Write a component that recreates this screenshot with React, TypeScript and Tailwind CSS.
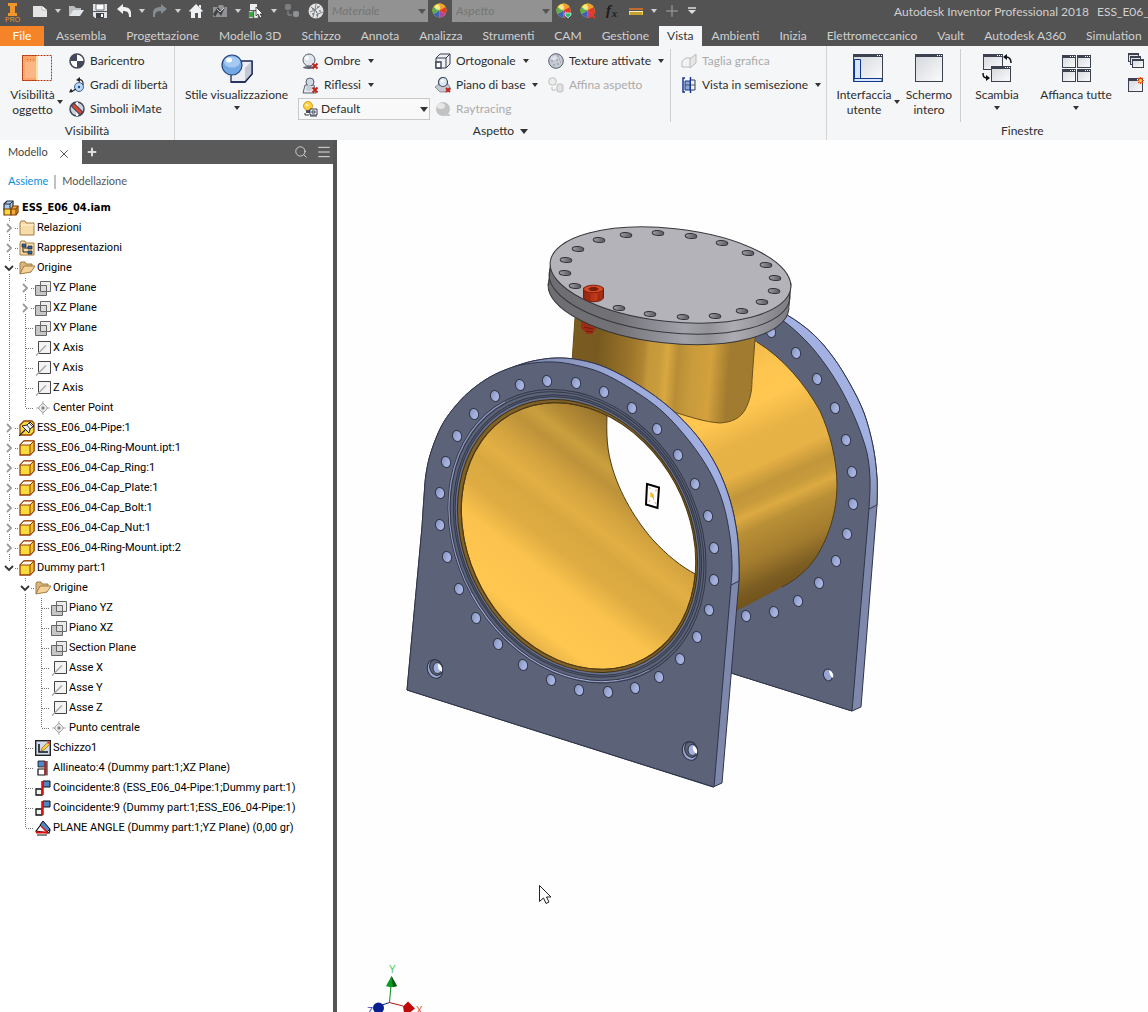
import type { ReactNode } from 'react';
import { Menu, Plus, Search, X } from 'lucide-react';

function Caret({ light = false }: { light?: boolean }) {
  return (
    <svg width="6" height="4" viewBox="0 0 6 4" className="shrink-0">
      <path d="M0 0h6L3 4z" fill={light ? '#d0d0d0' : '#333'} />
    </svg>
  );
}

function Svg({ w = 16, h = 16, children }: { w?: number; h?: number; children: ReactNode }) {
  return (
    <svg width={w} height={h} viewBox={`0 0 ${w} ${h}`} className="shrink-0" fill="none">
      {children}
    </svg>
  );
}

/* ---------- quick access icons ---------- */

const NewIcon = () => (
  <Svg>
    <path d="M1 3h9l5 4v7H1z" fill="#e4e4e4" />
    <path d="M10 3v4h5" fill="#fff" stroke="#999" strokeWidth=".6" />
  </Svg>
);

const OpenIcon = () => (
  <Svg>
    <path d="M1 13V3h5l2 2h5v2H5z" fill="#b9bcc0" />
    <path d="M5 7h11l-4 6H1z" fill="#e2e5e8" />
  </Svg>
);

const SaveIcon = () => (
  <Svg>
    <path d="M1 1h14v14H3l-2-2z" fill="#dfe2e6" />
    <path d="M4 1h8v6H4z" fill="#fff" stroke="#50545c" strokeWidth=".8" />
    <path d="M1 8h14v1H1z" fill="#50545c" />
    <path d="M4 10h8v5H4z" fill="#3c4048" />
    <path d="M9 11h2v3H9z" fill="#fff" />
  </Svg>
);

const UndoIcon = () => (
  <Svg>
    <path d="M1 6l6-5v3c5 0 8 2 8 6v4h-2c0-4-1-6-6-6v3z" fill="#f0f0f0" />
  </Svg>
);

const RedoIcon = () => (
  <Svg>
    <path d="M15 6L9 1v3c-5 0-8 2-8 6v4h2c0-4 1-6 6-6v3z" fill="#858b93" />
  </Svg>
);

const HomeIcon = () => (
  <Svg>
    <path d="M8 1l7 7-1 1-1-1v7h-3v-5H7v5H3V8L2 9 1 8z" fill="#eef0f2" />
    <path d="M11 2h2v4l-2-2z" fill="#eef0f2" />
  </Svg>
);

const UpdateIcon = () => (
  <Svg>
    <path d="M1 4h5l1-2h4l1 2h3v10H1z" fill="#909295" />
    <path d="M1 11l5-7 3 4 4-4-4 9-3-4-3 5z" fill="#3f4144" />
    <path d="M5 6l3 3 4-4" stroke="#c5c7c9" />
  </Svg>
);

const SelectIcon = () => (
  <Svg>
    <path d="M2 1h7v6H2z" fill="#eceff0" />
    <path d="M1 8h4v7H1zM6 8h4v7H6z" fill="#fff" stroke="#777" strokeWidth=".6" />
    <path d="M1 9h4v5H1z" fill="#3aa545" />
    <path d="M8 4v9l2-2 2 4 2-1-2-3h3z" fill="#fff" stroke="#333" strokeWidth=".8" />
  </Svg>
);

const LinksIcon = () => (
  <Svg>
    <rect x="1" y="1" width="6" height="6" rx="2" fill="#7b7f84" />
    <rect x="9" y="8" width="6" height="6" rx="2" fill="#8e9297" />
    <path d="M4 8v4h4" stroke="#8e9297" />
  </Svg>
);

const MaterialIcon = () => (
  <Svg>
    <circle cx="8" cy="8" r="7.500" fill="#e2e4e6" />
    <path d="M3 4l4 3 5-4M2 9l5-2 3 4 5-2M7 7l-2 7M10 11l-1 4M8 1l-1 6" stroke="#6c7076" strokeWidth=".8" />
    <path d="M4 6h2M9 4h2M11 8h2M4 11h2M8 12h2M8 9h1" stroke="#54585e" strokeWidth="1.200" />
  </Svg>
);

function ColorWheel({ mark }: { mark?: 'down' | 'x' }) {
  return (
    <Svg>
      <circle cx="7.500" cy="7.500" r="7" fill="#f1d83a" />
      <path d="M7.500 7.500V.5a7 7 0 0 1 6 3.500z" fill="#f2a132" />
      <path d="M7.500 7.500l6-3.500a7 7 0 0 1 0 7z" fill="#e2392c" />
      <path d="M7.500 7.500l6 3.500a7 7 0 0 1-6 3.500z" fill="#b0489d" />
      <path d="M7.500 7.500v7a7 7 0 0 1-6-3.500z" fill="#3b62b8" />
      <path d="M7.500 7.500l-6 3.500a7 7 0 0 1 0-7z" fill="#58b04a" />
      <circle cx="5.500" cy="4.500" r="2.500" fill="#fff" opacity=".45" />
      {mark === 'down' && <path d="M9 10h6v2l-3 3-3-3z" fill="#25c268" stroke="#e8f6ff" strokeWidth=".7" />}
      {mark === 'x' && <path d="M9 9l6 6M15 9l-6 6" stroke="#ea3a20" strokeWidth="1.800" />}
    </Svg>
  );
}

const FxIcon = () => (
  <Svg h={20}>
    <text x="2" y="14" fontFamily="Liberation Serif, serif" fontStyle="italic" fontSize="15" fontWeight="700" fill="#1c1c1c">f</text>
    <text x="8" y="16" fontFamily="Liberation Serif, serif" fontStyle="italic" fontSize="10" fontWeight="700" fill="#1c1c1c">x</text>
  </Svg>
);

const RulerIcon = () => (
  <Svg>
    <path d="M1 6h14" stroke="#e8702a" strokeWidth="1.500" />
    <path d="M1 8h14v1H1z" fill="#fff3c4" />
    <path d="M1 9h14v3H1z" fill="#f0c53a" />
    <path d="M3 12V9M5 12V9M7 12V9M9 12V9M11 12V9M13 12V9" stroke="#6a4d12" strokeWidth=".6" />
  </Svg>
);

/* ---------- ribbon icons ---------- */

const ObjectVisibilityIcon = () => (
  <Svg w={32} h={30}>
    <path d="M1 2h15v26H1z" fill="#fba56b" />
    <path d="M4 9h12v16H4z" fill="#fcb585" />
    <path d="M15 2h2v26h-2z" fill="#f4e3a4" />
    <path d="M1 2.500h15M1 27.500h15M1.500 2v26" stroke="#d2622c" />
    <path d="M1.500 2.500h29v25h-29z" stroke="#ab3a14" strokeDasharray="2 1" />
    <path d="M6 6.500h9" stroke="#d2622c" strokeDasharray="1 2" />
  </Svg>
);

const GravityIcon = () => (
  <Svg>
    <circle cx="8" cy="8" r="7" fill="#fff" />
    <path d="M8 1a7 7 0 0 0-7 7h7zM8 15a7 7 0 0 0 7-7H8z" fill="#43485a" />
    <circle cx="8" cy="8" r="7" stroke="#43485a" strokeWidth="1.500" />
  </Svg>
);

const FreedomIcon = () => (
  <Svg>
    <circle cx="10" cy="10" r="4.500" fill="#b9d8f3" stroke="#3f6391" />
    <circle cx="10" cy="10" r="1.200" fill="#1f4f96" />
    <path d="M9 3c3-1 6 1 5 5M7 12l-5 3" stroke="#222" strokeWidth="1.300" />
    <path d="M7 3l4-3v5zM0 15.500l2-4 2 3.500z" fill="#222" />
  </Svg>
);

const IMateIcon = () => (
  <Svg>
    <circle cx="8" cy="8" r="7" fill="#cfd4de" stroke="#43485a" strokeWidth="1.500" />
    <path d="M8 1v14" stroke="#f4f5f8" strokeWidth="2" />
    <path d="M3 3l10 10" stroke="#43485a" strokeWidth="5" />
    <path d="M4 4l8 8" stroke="#e5442f" strokeWidth="2.500" />
  </Svg>
);

const VisualStyleIcon = () => (
  <Svg w={32} h={32}>
    <path d="M10 16l8-8h13v13l-7 8H10z" fill="#eceef4" stroke="#1b2757" strokeWidth="1.300" />
    <path d="M24 29V15l7-7v13z" fill="#c3c8d5" />
    <path d="M31 8v13l-7 8H10" stroke="#1b2757" strokeWidth="1.300" />
    <circle cx="11" cy="12" r="10" fill="#74a8e4" stroke="#27467c" strokeWidth="1.200" />
    <ellipse cx="11" cy="9" rx="8" ry="5.500" fill="#a5cbf2" />
    <ellipse cx="8" cy="7" rx="3" ry="2.500" fill="#fff" />
  </Svg>
);

const RedX = () => <path d="M10.500 10.500l5 5M15.500 10.500l-5 5" stroke="#c9211a" strokeWidth="2" />;

const ShadowIcon = () => (
  <Svg w={17} h={17}>
    <ellipse cx="7" cy="14.500" rx="6" ry="1.500" fill="#5a6070" />
    <circle cx="7" cy="7" r="6" fill="#dfe5ec" stroke="#596072" />
    <circle cx="5" cy="5" r="2" fill="#fff" />
    <RedX />
  </Svg>
);

const ReflectIcon = () => (
  <Svg w={17} h={17}>
    <path d="M3 8h9l2 8H1z" fill="#e6e9ee" stroke="#596072" />
    <circle cx="8" cy="5" r="4" fill="#cfd8e2" stroke="#596072" />
    <circle cx="7" cy="11" r="3" fill="#c4ccd6" />
    <RedX />
  </Svg>
);

const LightIcon = () => (
  <Svg>
    <circle cx="6" cy="5" r="4.500" fill="#ffcf3a" stroke="#c98c10" strokeWidth=".8" />
    <circle cx="5" cy="4" r="1.500" fill="#fff4bd" />
    <path d="M4 9h4v3H4z" fill="#4c5261" />
    <path d="M3 12v2h4" stroke="#333" />
    <path d="M8 8h7v6H8z" fill="#fff" stroke="#333b4f" />
    <path d="M10 10h3v2h-3zM8 15h7" stroke="#333b4f" />
  </Svg>
);

const OrthoIcon = () => (
  <Svg>
    <path d="M1 5l4-4h10v10l-4 4H1z" fill="#eef0f3" stroke="#333b4f" />
    <path d="M11 15V5l4-4M1 5h10" stroke="#333b4f" />
    <path d="M1 9h5v6H1z" fill="#fff" stroke="#333b4f" strokeWidth="1.300" />
  </Svg>
);

const GroundIcon = () => (
  <Svg>
    <path d="M0 10l4-3h9l3 5-5 3H5z" fill="#c4c8cf" stroke="#6e7482" strokeWidth=".7" />
    <circle cx="8" cy="5" r="4.500" fill="#dde7f2" stroke="#3d475c" strokeWidth="1.200" />
    <circle cx="7" cy="4" r="1.500" fill="#fff" />
    <path d="M11 11l4 4M15 11l-4 4" stroke="#c9211a" strokeWidth="2" />
  </Svg>
);

const RayIcon = () => (
  <Svg>
    <circle cx="8" cy="8" r="7" fill="#c2c2c2" />
    <ellipse cx="6" cy="5" rx="4" ry="3" fill="#e6e6e6" />
    <path d="M9 14h6" stroke="#c8c8c8" strokeWidth="2" />
  </Svg>
);

const TextureIcon = () => (
  <Svg>
    <circle cx="8" cy="8" r="7.300" fill="#c4c9d2" stroke="#555c6b" />
    <path d="M4 4h2M9 3h2M3 8h2M8 7h2M12 9h1M5 12h2M9 11h2M11 6h1" stroke="#8a92a2" strokeWidth="1.200" />
    <ellipse cx="6" cy="5" rx="3" ry="2" fill="#eceff3" opacity=".7" />
  </Svg>
);

const RefineIcon = () => (
  <Svg>
    <circle cx="4.500" cy="4.500" r="3.800" fill="#ededed" stroke="#bdbdbd" />
    <rect x="9" y="7" width="6" height="8" rx="2" fill="#e2e2e2" stroke="#bdbdbd" />
    <path d="M4 10v3h4" stroke="#bdbdbd" />
  </Svg>
);

const SliceIcon = () => (
  <Svg>
    <path d="M1 8l4-3h5v9H1z" fill="#f3f3f3" stroke="#bbb" />
    <path d="M9 6l6-5v9l-6 5z" fill="#e6e6e6" stroke="#bbb" />
  </Svg>
);

const HalfSectionIcon = () => (
  <Svg>
    <path d="M4 1H2v14h2M9.500 0v16" stroke="#12368f" strokeWidth="1.500" />
    <path d="M4 4h5v9H4z" fill="#8fa6d4" stroke="#12368f" />
    <path d="M10 3h4v10h-4" fill="#eef0f4" stroke="#333b4f" />
    <path d="M4 8h10" stroke="#333b4f" strokeWidth=".8" />
  </Svg>
);

function WindowShape({ x, y, w, h, bar = 3 }: { x: number; y: number; w: number; h: number; bar?: number }) {
  return (
    <g>
      <rect x={x + 0.5} y={y + 0.5} width={w - 1} height={h - 1} fill="url(#win)" stroke="#3c4150" />
      <rect x={x} y={y} width={w} height={bar} fill="#3c4150" />
      {bar > 2 && <path d={`M${x + w - 6} ${y + 1.5}h5`} stroke="#fff" strokeDasharray="1 1" />}
    </g>
  );
}

const WinGradient = () => (
  <defs>
    <linearGradient id="win" x1="0" y1="0" x2="1" y2="1">
      <stop offset="0" stopColor="#d3d6db" />
      <stop offset="1" stopColor="#fafbfc" />
    </linearGradient>
  </defs>
);

const InterfaceIcon = () => (
  <Svg w={30} h={30}>
    <WinGradient />
    <WindowShape x={0} y={1} w={30} h={28} />
    <path d="M1.500 6.500h6v19h-6z" fill="#d6e7f8" stroke="#12368f" />
    <path d="M1 25.500h28v3H1z" fill="#d6e7f8" stroke="#12368f" />
  </Svg>
);

const FullScreenIcon = () => (
  <Svg w={30} h={30}>
    <WindowShape x={1} y={1} w={28} h={28} />
  </Svg>
);

const SwitchIcon = () => (
  <Svg w={30} h={30}>
    <WindowShape x={1} y={1} w={20} h={16} />
    <WindowShape x={9} y={13} w={20} h={16} />
    <path d="M24 4c4 0 5 2 5 6M1 20c0 4 1 5 5 5" stroke="#111" strokeWidth="1.500" />
    <path d="M21 4l4-3v6zM8 25l-4-3v6z" fill="#111" />
  </Svg>
);

const TileIcon = () => (
  <Svg w={30} h={30}>
    <WindowShape x={1} y={2} w={14} h={13} />
    <WindowShape x={16} y={2} w={14} h={13} />
    <WindowShape x={1} y={16} w={14} h={13} />
    <WindowShape x={16} y={16} w={14} h={13} />
  </Svg>
);

const CascadeIcon = () => (
  <Svg>
    <WindowShape x={0} y={0} w={11} h={9} bar={2} />
    <WindowShape x={2} y={3} w={11} h={9} bar={2} />
    <WindowShape x={4} y={6} w={12} h={9} bar={2} />
  </Svg>
);

const NewWindowIcon = () => (
  <Svg>
    <WindowShape x={0} y={1} w={15} h={14} />
    <path d="M12.500 0v7M9 3.500h7M10 1l5 5M15 1l-5 5" stroke="#e8501e" strokeWidth="1.200" />
    <circle cx="12.500" cy="3.500" r="1.500" fill="#ffd84a" />
  </Svg>
);

/* ---------- browser tree icons ---------- */

const PartIcon = () => (
  <Svg>
    <path d="M1 5l4-4h10v10l-4 4H1z" fill="#f6dc3c" stroke="#9a3e06" strokeWidth="1.300" />
    <path d="M1 5l4-4h10l-4 4z" fill="#fffbe6" stroke="#9a3e06" />
    <path d="M11 5l4-4v10l-4 4z" fill="#eec02e" stroke="#9a3e06" />
  </Svg>
);

const PinnedPartIcon = () => (
  <Svg>
    <path d="M1 5l4-4h8l2 2v9l-3 3H1z" fill="#f6dc3c" stroke="#9a3e06" strokeWidth="1.300" />
    <path d="M0 16l6-6" stroke="#222" strokeWidth="1.200" />
    <path d="M3 6l7 7 1-4 4-3-4-4-3 3z" fill="#ededed" stroke="#222" />
    <path d="M8 5l3 4M10 3l4 4" stroke="#222" strokeWidth=".8" />
  </Svg>
);

const AssemblyIcon = () => (
  <Svg>
    <path d="M1 4l3-3h6v6l-2 3H1z" fill="#aecbe8" stroke="#222c46" strokeWidth="1.200" />
    <path d="M1 4h6l3-3M7 4v5" stroke="#222c46" />
    <path d="M1 9h7v6H1z" fill="#f8d83a" stroke="#7a3c06" strokeWidth="1.200" />
    <path d="M8 9l2-3h5v6l-2 3H8z" fill="#f0a93a" stroke="#7a3c06" strokeWidth="1.200" />
    <path d="M8 9h5l2-3M13 9v6" stroke="#7a3c06" />
  </Svg>
);

const FolderIcon = () => (
  <Svg>
    <path d="M1 3l1-2h4l1 2h8v12H1z" fill="#f6dca6" stroke="#a67c45" />
    <path d="M2 5h13" stroke="#fff4d8" />
  </Svg>
);

const RepresentationsIcon = () => (
  <Svg>
    <path d="M1 3l1-2h4l1 2h8v12H1z" fill="#f6dca6" stroke="#a67c45" />
    <path d="M4 6v6h5M5 8h5" stroke="#222" />
    <path d="M3 4h4v3H3zM9 6h4v3H9zM9 11h4v3H9z" fill="#2d66b3" stroke="#222" strokeWidth=".7" />
  </Svg>
);

const OpenFolderIcon = () => (
  <Svg>
    <path d="M1 14V3l1-1h4l1 2h6v3" fill="#d9b77a" stroke="#a67c45" />
    <path d="M1 14L5 6h11l-4 6z" fill="#f3d397" stroke="#a67c45" />
  </Svg>
);

const PlaneIcon = () => (
  <Svg>
    <path d="M5.500 1.500h10v10h-10z" fill="#ececec" stroke="#666" />
    <path d="M.5 5.500h11v10H.5z" fill="#c6c6c6" stroke="#666" />
    <path d="M5.500 5.500h6v6h-6z" fill="#dcdcdc" stroke="#666" />
  </Svg>
);

const AxisIcon = () => (
  <Svg>
    <path d="M3.500 1.500h12v12h-12z" fill="#f3f3f3" stroke="#444" />
    <path d="M1 15.500L11 5.500" stroke="#aaa" strokeWidth="1.500" />
  </Svg>
);

const PointIcon = () => (
  <Svg>
    <path d="M8 3l5 5-5 5-5-5z" fill="#f1f1f1" stroke="#a5a5a5" />
    <path d="M8 1v4M8 11v4M1 8h4M11 8h4" stroke="#b3b3b3" />
    <circle cx="8" cy="8" r="1.700" fill="#888" />
  </Svg>
);

const SketchIcon = () => (
  <Svg>
    <rect x=".7" y=".7" width="14.600" height="14.600" fill="#cfdeee" stroke="#222" strokeWidth="1.400" />
    <path d="M4 4v8h9" stroke="#111" strokeWidth="1.500" />
    <path d="M6 11l1-3 6-6 2 2-6 6z" fill="#ffce3d" stroke="#a86d12" strokeWidth=".8" />
    <path d="M12 3l2-2 1 2-1 1z" fill="#e2392c" />
  </Svg>
);

const FlushIcon = () => (
  <Svg>
    <path d="M3 1h7v6H3z" fill="#4d87c4" stroke="#111" strokeWidth=".8" />
    <path d="M3 9h7v6H3z" fill="#fff" stroke="#111" strokeWidth="1.200" />
    <path d="M10.500 1v14" stroke="#e00f0f" strokeWidth="2" />
    <path d="M12 1v14.500" stroke="#111" />
  </Svg>
);

const MateIcon = () => (
  <Svg>
    <path d="M8 1h7v6H8z" fill="#4d87c4" stroke="#111" />
    <path d="M1 9h6v6H1z" fill="#f3f3f3" stroke="#111" strokeWidth="1.300" />
    <path d="M7.500 1v14" stroke="#e00f0f" strokeWidth="2.500" />
  </Svg>
);

const AngleIcon = () => (
  <Svg>
    <path d="M1 11l7-9 7 8-1 3z" fill="#fff" stroke="#111" strokeWidth="1.200" />
    <path d="M8 1l7 8-3 3-7-7z" fill="#4d87c4" stroke="#111" />
    <path d="M6 6l6 6" stroke="#e00f0f" strokeWidth="1.500" />
    <path d="M1 12.500h12" stroke="#e00f0f" strokeWidth="2" />
    <path d="M2 15h10" stroke="#111" />
  </Svg>
);

/* ---------- title bar ---------- */

function QuickButton({ label, children }: { label: string; children: ReactNode }) {
  return (
    <button aria-label={label} className="flex w-6 shrink-0 items-center justify-center">
      {children}
    </button>
  );
}

function QuickCaret({ label }: { label: string }) {
  return (
    <button aria-label={label} className="flex w-3 shrink-0 items-center justify-center">
      <Caret light />
    </button>
  );
}

function QuickSelect({ label }: { label: string }) {
  return (
    <div className="relative h-[22px] w-[100px] shrink-0">
      <select
        aria-label={label}
        className="block h-full w-full appearance-none bg-[#929292] px-1 text-xs italic text-[#757575]"
      >
        <option>{label}</option>
      </select>
      <span className="pointer-events-none absolute top-[9px] right-[2px]">
        <svg width="8" height="5"><path d="M0 0h8L4 5z" fill="#555" /></svg>
      </span>
    </div>
  );
}

function TitleBar() {
  return (
    <div className="flex h-[26px] overflow-hidden bg-[#535353] text-[#d0d0d0]">
      <div className="flex w-7 shrink-0 justify-center">
        <svg width="20" height="26" viewBox="0 0 20 26">
          <path d="M4 3h9v3h-2v7h2v3H4v-3h2V6H4z" fill="#f0962c" />
          <text x="1" y="22" fontSize="7" fontFamily="Liberation Sans, sans-serif" fill="#f0962c">PRO</text>
        </svg>
      </div>
      <div className="flex h-[22px] shrink-0">
        <QuickButton label="Nuovo"><NewIcon /></QuickButton>
        <QuickCaret label="Opzioni nuovo" />
        <QuickButton label="Apri"><OpenIcon /></QuickButton>
        <QuickButton label="Salva"><SaveIcon /></QuickButton>
        <QuickButton label="Annulla"><UndoIcon /></QuickButton>
        <QuickCaret label="Opzioni annulla" />
        <QuickButton label="Ripeti"><RedoIcon /></QuickButton>
        <QuickCaret label="Opzioni ripeti" />
        <QuickButton label="Home"><HomeIcon /></QuickButton>
        <QuickButton label="Aggiorna"><UpdateIcon /></QuickButton>
        <QuickCaret label="Opzioni aggiorna" />
        <QuickButton label="Seleziona"><SelectIcon /></QuickButton>
        <QuickCaret label="Opzioni seleziona" />
        <QuickButton label="Collegamenti"><LinksIcon /></QuickButton>
        <QuickButton label="Materiali"><MaterialIcon /></QuickButton>
        <QuickSelect label="Materiale" />
        <QuickButton label="Aspetti"><ColorWheel /></QuickButton>
        <QuickSelect label="Aspetto" />
        <QuickButton label="Regola"><ColorWheel mark="down" /></QuickButton>
        <QuickButton label="Cancella"><ColorWheel mark="x" /></QuickButton>
        <QuickButton label="Parametri"><FxIcon /></QuickButton>
        <QuickButton label="Misura"><RulerIcon /></QuickButton>
        <QuickCaret label="Opzioni misura" />
        <QuickButton label="Aggiungi"><Plus size={18} color="#8d8d8d" /></QuickButton>
        <button aria-label="Personalizza" className="flex w-4 items-center justify-center">
          <svg width="8" height="8"><path d="M0 1h8" stroke="#ddd" strokeWidth="1.500" /><path d="M0 3h8L4 7z" fill="#ddd" /></svg>
        </button>
      </div>
      <div className="flex min-w-0 flex-1 gap-2 pl-[194px] text-xs leading-6 whitespace-nowrap">
        <span>Autodesk Inventor Professional 2018</span>
        <span>ESS_E06_04</span>
      </div>
    </div>
  );
}

const tabs = [
  'Assembla', 'Progettazione', 'Modello 3D', 'Schizzo', 'Annota', 'Analizza', 'Strumenti', 'CAM',
  'Gestione', 'Vista', 'Ambienti', 'Inizia', 'Elettromeccanico', 'Vault', 'Autodesk A360', 'Simulation',
];

function TabBar() {
  return (
    <nav className="flex h-5 overflow-hidden bg-[#535353] text-xs whitespace-nowrap text-[#d0d0d0]">
      <button className="mr-[2px] w-11 shrink-0 bg-[#f58428] text-white">File</button>
      {tabs.map((tab) => (
        <button
          key={tab}
          className={tab === 'Vista' ? 'shrink-0 bg-[#f5f6f7] px-2 text-[#333]' : 'shrink-0 px-[10px]'}
        >
          {tab}
        </button>
      ))}
    </nav>
  );
}

/* ---------- ribbon ---------- */

type BigProps = { icon: ReactNode; lines: string[]; caret?: 'side' | 'below'; className: string };

function BigButton({ icon, lines, caret, className }: BigProps) {
  return (
    <button className={`flex shrink-0 flex-col items-center pt-1 leading-[15px] ${className}`}>
      <span className="flex h-[34px] items-start">{icon}</span>
      <span className="flex items-center">
        <span>
          {lines.map((line) => (
            <span key={line} className="block whitespace-nowrap">{line}</span>
          ))}
        </span>
        {caret === 'side' && <span className="ml-[2px]"><Caret /></span>}
      </span>
      {caret === 'below' && <span className="pt-1"><Caret /></span>}
    </button>
  );
}

type SmallProps = { icon: ReactNode; label: string; caret?: boolean; disabled?: boolean };

function SmallButton({ icon, label, caret, disabled }: SmallProps) {
  return (
    <button
      disabled={disabled}
      className="flex h-6 items-center gap-[5px] whitespace-nowrap disabled:text-[#ababab]"
    >
      {icon}
      <span>{label}</span>
      {caret && <span className="ml-[2px]"><Caret /></span>}
    </button>
  );
}

function Ribbon() {
  return (
    <div className="flex h-[94px] overflow-hidden bg-[#f5f6f7] text-xs text-[#2d2d2d]">
      <section className="flex w-[175px] shrink-0 flex-col border-r border-[#d3d3d3]">
        <div className="flex h-[76px] pt-[3px]">
          <BigButton icon={<ObjectVisibilityIcon />} lines={['Visibilità', 'oggetto']} caret="side" className="w-[69px] pl-1" />
          <div>
            <SmallButton icon={<GravityIcon />} label="Baricentro" />
            <SmallButton icon={<FreedomIcon />} label="Gradi di libertà" />
            <SmallButton icon={<IMateIcon />} label="Simboli iMate" />
          </div>
        </div>
        <h2 className="text-center leading-[18px]">Visibilità</h2>
      </section>

      <section className="flex w-[652px] shrink-0 flex-col border-r border-[#d3d3d3]">
        <div className="flex h-[76px] pt-[3px]">
          <BigButton icon={<VisualStyleIcon />} lines={['Stile visualizzazione']} caret="below" className="w-[123px]" />
          <div className="w-[137px]">
            <div className="pl-1">
              <SmallButton icon={<ShadowIcon />} label="Ombre" caret />
              <SmallButton icon={<ReflectIcon />} label="Riflessi" caret />
            </div>
            <div className="relative mt-[1px] h-[22px] w-[132px]">
              <select aria-label="Stile di illuminazione" className="block h-full w-full appearance-none border border-[#c9c9c9] bg-[#f9f9f9] pl-[22px]">
                <option>Default</option>
              </select>
              <span className="pointer-events-none absolute top-[3px] left-1"><LightIcon /></span>
              <span className="pointer-events-none absolute top-[9px] right-[2px]">
                <svg width="8" height="5"><path d="M0 0h8L4 5z" fill="#333" /></svg>
              </span>
            </div>
          </div>
          <div className="w-[113px]">
            <SmallButton icon={<OrthoIcon />} label="Ortogonale" caret />
            <SmallButton icon={<GroundIcon />} label="Piano di base" caret />
            <SmallButton icon={<RayIcon />} label="Raytracing" disabled />
          </div>
          <div className="w-[123px] border-r border-[#cfcfcf]">
            <SmallButton icon={<TextureIcon />} label="Texture attivate" caret />
            <SmallButton icon={<RefineIcon />} label="Affina aspetto" disabled />
          </div>
          <div className="pl-[10px]">
            <SmallButton icon={<SliceIcon />} label="Taglia grafica" disabled />
            <SmallButton icon={<HalfSectionIcon />} label="Vista in semisezione" caret />
          </div>
        </div>
        <button className="flex items-center justify-center gap-[6px] self-center leading-[18px]">
          Aspetto
          <svg width="8" height="5"><path d="M0 0h8L4 5z" fill="#333" /></svg>
        </button>
      </section>

      <section className="flex flex-1 flex-col">
        <div className="flex h-[76px] pt-[3px]">
          <BigButton icon={<InterfaceIcon />} lines={['Interfaccia', 'utente']} caret="side" className="w-[78px] pl-1" />
          <BigButton icon={<FullScreenIcon />} lines={['Schermo', 'intero']} className="w-12" />
          <div className="ml-[7px] border-l border-[#cfcfcf]" />
          <BigButton icon={<SwitchIcon />} lines={['Scambia']} caret="below" className="w-[72px]" />
          <BigButton icon={<TileIcon />} lines={['Affianca tutte']} caret="below" className="w-[86px]" />
          <div className="ml-[9px] shrink-0">
            <button aria-label="Sovrapponi" className="flex h-6 items-center"><CascadeIcon /></button>
            <button aria-label="Nuova finestra" className="flex h-6 items-center"><NewWindowIcon /></button>
          </div>
        </div>
        <h2 className="pl-[174px] leading-[18px]">Finestre</h2>
      </section>
    </div>
  );
}

/* ---------- model browser ---------- */

// one character per indent column:
// "|" guide, "t" branch, "l" last branch, ">" collapsed, "v" expanded, "w" expanded with no guide below
type Row = [guides: string, icon: ReactNode, label: string];

const rows: Row[] = [
  ['>', <FolderIcon />, 'Relazioni'],
  ['>', <RepresentationsIcon />, 'Rappresentazioni'],
  ['v', <OpenFolderIcon />, 'Origine'],
  ['|>', <PlaneIcon />, 'YZ Plane'],
  ['|>', <PlaneIcon />, 'XZ Plane'],
  ['|t', <PlaneIcon />, 'XY Plane'],
  ['|t', <AxisIcon />, 'X Axis'],
  ['|t', <AxisIcon />, 'Y Axis'],
  ['|t', <AxisIcon />, 'Z Axis'],
  ['|l', <PointIcon />, 'Center Point'],
  ['>', <PinnedPartIcon />, 'ESS_E06_04-Pipe:1'],
  ['>', <PartIcon />, 'ESS_E06_04-Ring-Mount.ipt:1'],
  ['>', <PartIcon />, 'ESS_E06_04-Cap_Ring:1'],
  ['>', <PartIcon />, 'ESS_E06_04-Cap_Plate:1'],
  ['>', <PartIcon />, 'ESS_E06_04-Cap_Bolt:1'],
  ['>', <PartIcon />, 'ESS_E06_04-Cap_Nut:1'],
  ['>', <PartIcon />, 'ESS_E06_04-Ring-Mount.ipt:2'],
  ['w', <PartIcon />, 'Dummy part:1'],
  [' v', <OpenFolderIcon />, 'Origine'],
  [' |t', <PlaneIcon />, 'Piano YZ'],
  [' |t', <PlaneIcon />, 'Piano XZ'],
  [' |t', <PlaneIcon />, 'Section Plane'],
  [' |t', <AxisIcon />, 'Asse X'],
  [' |t', <AxisIcon />, 'Asse Y'],
  [' |t', <AxisIcon />, 'Asse Z'],
  [' |l', <PointIcon />, 'Punto centrale'],
  [' t', <SketchIcon />, 'Schizzo1'],
  [' t', <FlushIcon />, 'Allineato:4 (Dummy part:1;XZ Plane)'],
  [' t', <MateIcon />, 'Coincidente:8 (ESS_E06_04-Pipe:1;Dummy part:1)'],
  [' t', <MateIcon />, 'Coincidente:9 (Dummy part:1;ESS_E06_04-Pipe:1)'],
  [' l', <AngleIcon />, 'PLANE ANGLE (Dummy part:1;YZ Plane) (0,00 gr)'],
];

const guidePaths: Record<string, string> = {
  ' ': '',
  '|': 'M8.500 0v20',
  t: 'M8.500 0v20M9 10.500h8',
  l: 'M8.500 0v10M9 10.500h8',
  '>': 'M8.500 0v4M8.500 16v4M14 10.500h3',
  v: 'M8.500 0v4M8.500 16v4M14 10.500h3',
  w: 'M8.500 0v4M14 10.500h3',
};

function Guide({ kind }: { kind: string }) {
  return (
    <svg width="16" height="20" viewBox="0 0 16 20" fill="none" className="shrink-0 overflow-visible">
      <path d={guidePaths[kind]} stroke="#777" strokeDasharray="1 1" />
      {kind === '>' && <path d="M6 6l4 4-4 4" stroke="#9a9a9a" strokeWidth="1.800" />}
      {(kind === 'v' || kind === 'w') && <path d="M4 8l4 4 4-4" stroke="#333" strokeWidth="1.800" />}
    </svg>
  );
}

function Browser() {
  return (
    <aside className="flex w-[337px] shrink-0 flex-col border-r-4 border-[#555] bg-white text-[11px]">
      <div className="flex h-6 items-center bg-[#5a5a5a]">
        <div className="flex h-full w-[82px] items-center justify-between bg-white pr-[11px] pl-2 text-[#444]">
          <span>Modello</span>
          <button aria-label="Chiudi" className="pt-1"><X size={14} strokeWidth={1.5} /></button>
        </div>
        <button aria-label="Aggiungi scheda" className="ml-1"><Plus size={12} strokeWidth={4} color="#ddd" /></button>
        <button aria-label="Cerca" className="ml-auto"><Search size={14} strokeWidth={1.5} color="#ddd" /></button>
        <button aria-label="Menu" className="mr-[1px] ml-2"><Menu size={16} strokeWidth={1.5} color="#ddd" /></button>
      </div>
      <div className="flex h-[33px] items-center pt-[2px] pl-2 text-[#555]">
        <button className="text-[#0d8fe0]">Assieme</button>
        <span className="mx-[6px] h-[14px] w-[2px] bg-[#c0c0c0]" />
        <button>Modellazione</button>
      </div>
      <ul className="pt-[1px] font-['Roboto',sans-serif] text-black">
        <li className="flex h-5 items-center gap-[3px] pl-[3px] font-['DejaVu_Sans_Condensed','DejaVu_Sans',sans-serif] font-bold">
          <AssemblyIcon />
          ESS_E06_04.iam
        </li>
        {rows.map(([guides, icon, label], i) => (
          <li key={i} className="flex h-5 items-center pl-[1px] whitespace-nowrap">
            {guides.split('').map((kind, j) => <Guide key={j} kind={kind} />)}
            <span className="flex w-5 justify-center">{icon}</span>
            {label}
          </li>
        ))}
      </ul>
    </aside>
  );
}

/* ---------- 3D view ---------- */

type Point = [x: number, y: number];

// cubic segments through every point, without the leading "M"
function smooth(points: Point[]) {
  let d = `${points[0][0]} ${points[0][1]}`;
  for (let i = 0; i < points.length - 1; i++) {
    const p0 = points[i - 1] ?? points[i];
    const p1 = points[i];
    const p2 = points[i + 1];
    const p3 = points[i + 2] ?? p2;
    const c1 = [p1[0] + (p2[0] - p0[0]) / 6, p1[1] + (p2[1] - p0[1]) / 6];
    const c2 = [p2[0] - (p3[0] - p1[0]) / 6, p2[1] - (p3[1] - p1[1]) / 6];
    d += `C${c1[0]} ${c1[1]} ${c2[0]} ${c2[1]} ${p2[0]} ${p2[1]}`;
  }
  return d;
}

const frontLeft: Point[] = [
  [422, 527], [424, 497], [426, 474], [431, 452], [441, 427], [453, 409], [469, 392], [490, 377], [513, 367],
];
const frontRim: Point[] = [
  [513, 367], [533, 361], [556, 358], [580, 360], [607, 368], [640, 386], [670, 408],
  [697, 436], [717, 467], [730, 500], [737, 533], [739, 563], [739, 581],
];
const frontFace: Point[] = [
  ...frontLeft, [533, 363], [554, 362], [575, 365], [602, 373], [633, 390], [663, 412],
  [690, 442], [710, 472], [723, 503], [730, 537], [732, 566], [731, 585],
];
const backRim: Point[] = [
  [760, 304], [787, 315], [813, 334], [833, 357], [850, 384], [864, 413], [873, 446], [877, 478], [877, 505],
];
const backFace: Point[] = [
  [756, 308], [782, 320], [807, 342], [827, 367], [843, 393], [857, 423], [867, 453], [870, 480], [869, 509],
];

const frontHoles: Point[] = [
  [547, 381], [576, 383], [604, 392], [632, 408], [657, 429], [678, 455], [695, 484], [708, 516],
  [714, 548], [714, 580], [709, 610], [697, 637], [680, 659], [659, 677], [635, 688], [608, 692],
  [579, 690], [551, 680], [523, 665], [498, 644], [476, 618], [459, 589], [447, 557], [440, 525],
  [440, 493], [446, 462], [457, 436], [474, 414], [495, 396], [520, 385],
];

const backHoles: Point[] = [
  [771, 332], [796, 353], [817, 379], [835, 408], [846, 440], [852, 472], [853, 504], [847, 534],
  [836, 561], [819, 583], [798, 601], [774, 612], [746, 616],
];

const capHoles: Point[] = [
  [658, 233], [691, 236], [722, 243], [748, 253], [766, 265], [775, 278], [774, 291], [762, 302],
  [742, 311], [715, 316], [683, 317], [650, 314], [619, 308], [575, 286], [565, 273], [566, 260],
  [578, 249], [599, 240], [626, 235],
];

function PlateHole({ x, y }: { x: number; y: number }) {
  return (
    <ellipse cx={x} cy={y} rx="4.600" ry="5.600" transform={`rotate(-15 ${x} ${y})`} fill="url(#hole)" stroke="#333849" />
  );
}

function MountHole({ x, y }: { x: number; y: number }) {
  return (
    <g stroke="#2c3142">
      <ellipse cx={x} cy={y} rx="7.500" ry="9.500" transform={`rotate(-20 ${x} ${y})`} fill="#9aa6cf" />
      <ellipse cx={x + 1.5} cy={y - 1} rx="6.200" ry="8" transform={`rotate(-20 ${x} ${y})`} fill="#5c6378" />
      <ellipse cx={x + 2.5} cy={y - 1} rx="4.500" ry="5.500" fill="#a3b0de" />
      <path d={`M${x + 3} ${y - 5}c4 1 5 5 3.500 8c-3-2-4-5-3.500-8z`} fill="#fff" stroke="none" />
    </g>
  );
}

function Viewport() {
  return (
    <main className="min-w-0 flex-1 bg-[#fefefe]">
      <svg viewBox="337 140 811 872" className="h-full w-full" fill="none">
        <defs>
          <linearGradient id="pipe" gradientUnits="userSpaceOnUse" x1="700" y1="365" x2="799" y2="585">
            <stop offset="0" stopColor="#f0b949" />
            <stop offset=".12" stopColor="#fdc54f" />
            <stop offset=".24" stopColor="#ffc650" />
            <stop offset=".36" stopColor="#e8b346" />
            <stop offset=".48" stopColor="#e6b145" />
            <stop offset=".56" stopColor="#c2963a" />
            <stop offset=".61" stopColor="#c89b3b" />
            <stop offset=".65" stopColor="#dcaa42" />
            <stop offset=".71" stopColor="#b98f36" />
            <stop offset=".83" stopColor="#a37c2e" />
            <stop offset=".93" stopColor="#7c5d22" />
            <stop offset="1" stopColor="#6f521c" />
          </linearGradient>
          <linearGradient id="bore" gradientUnits="userSpaceOnUse" x1="550" y1="392" x2="670" y2="658">
            <stop offset="0" stopColor="#6f5320" />
            <stop offset=".06" stopColor="#86662a" />
            <stop offset=".13" stopColor="#a07b30" />
            <stop offset=".2" stopColor="#b98f37" />
            <stop offset=".24" stopColor="#caa03e" />
            <stop offset=".29" stopColor="#bd9239" />
            <stop offset=".36" stopColor="#d3a33f" />
            <stop offset=".43" stopColor="#e2af44" />
            <stop offset=".48" stopColor="#d8a840" />
            <stop offset=".57" stopColor="#deac42" />
            <stop offset=".66" stopColor="#fbc34d" />
            <stop offset=".82" stopColor="#ffc750" />
            <stop offset=".88" stopColor="#e9b548" />
            <stop offset=".92" stopColor="#b98f37" />
            <stop offset="1" stopColor="#8a6826" />
          </linearGradient>
          <linearGradient id="neck" gradientUnits="userSpaceOnUse" x1="573" y1="0" x2="756" y2="14">
            <stop offset="0" stopColor="#9a762c" />
            <stop offset=".12" stopColor="#7a5c22" />
            <stop offset=".28" stopColor="#785a21" />
            <stop offset=".45" stopColor="#997329" />
            <stop offset=".53" stopColor="#b08532" />
            <stop offset=".56" stopColor="#c4973a" />
            <stop offset=".62" stopColor="#c89b3c" />
            <stop offset=".66" stopColor="#d9a841" />
            <stop offset=".72" stopColor="#b88d36" />
            <stop offset=".8" stopColor="#c99b3c" />
            <stop offset=".9" stopColor="#d3a13d" />
            <stop offset="1" stopColor="#a17b2f" />
          </linearGradient>
          <linearGradient id="capSide" gradientUnits="userSpaceOnUse" x1="548" y1="0" x2="791" y2="0">
            <stop offset="0" stopColor="#6d6d72" />
            <stop offset=".3" stopColor="#717176" />
            <stop offset=".45" stopColor="#8b8b93" />
            <stop offset=".58" stopColor="#a2a2aa" />
            <stop offset=".68" stopColor="#929298" />
            <stop offset=".78" stopColor="#acacb2" />
            <stop offset="1" stopColor="#7c7c82" />
          </linearGradient>
          <linearGradient id="rim" gradientUnits="userSpaceOnUse" x1="520" y1="360" x2="740" y2="580">
            <stop offset="0" stopColor="#7c87ab" />
            <stop offset=".25" stopColor="#9daada" />
            <stop offset=".7" stopColor="#a2b0e2" />
            <stop offset=".9" stopColor="#97a4ce" />
            <stop offset="1" stopColor="#8a95b8" />
          </linearGradient>
          <linearGradient id="rimBack" gradientUnits="userSpaceOnUse" x1="0" y1="315" x2="0" y2="508">
            <stop offset="0" stopColor="#a2b0e2" />
            <stop offset=".65" stopColor="#a2b0e2" />
            <stop offset="1" stopColor="#8590b2" />
          </linearGradient>
          <linearGradient id="hole" x1="0" y1="0" x2="1" y2="1">
            <stop offset="0" stopColor="#7d88ad" />
            <stop offset=".55" stopColor="#a3b0de" />
            <stop offset="1" stopColor="#a9b6e4" />
          </linearGradient>
          <linearGradient id="capHole" x1="0" y1="0" x2="1" y2="0">
            <stop offset="0" stopColor="#a0a0a6" />
            <stop offset="1" stopColor="#56565b" />
          </linearGradient>
          <linearGradient id="bolt" x1="0" y1="0" x2="1" y2="0">
            <stop offset="0" stopColor="#8f2410" />
            <stop offset=".6" stopColor="#c23a1a" />
            <stop offset="1" stopColor="#9a2a12" />
          </linearGradient>
          <clipPath id="boreClip">
            <ellipse cx="578.500" cy="536" rx="139.300" ry="110" transform="rotate(61.700 578.500 536)" />
          </clipPath>
        </defs>

        {/* rear mount */}
        <path d={`M${smooth(backRim)}L861 707L852 711L731 673V560Z`} fill="#7d88aa" stroke="#30354a" />
        <path d={`M${smooth(backRim)}L869 509Z`} fill="url(#rimBack)" stroke="#30354a" />
        <path d={`M${smooth(backFace)}L852 711L731 673V560Z`} fill="#5c6378" stroke="#30354a" />
        {backHoles.map(([x, y]) => <PlateHole key={`${x}-${y}`} x={x} y={y} />)}
        <ellipse cx="828" cy="675" rx="4.500" ry="6" transform="rotate(-15 828 675)" fill="#98a5d3" stroke="#2c3142" />
        <path d="M829 670c3 1 5 4 4 8c-2-1-4-4-4-8z" fill="#fff" />

        {/* main pipe */}
        <path
          d="M660 340L757 342C783 358 805 384 820 411C830 433 837 460 837 485C837 510 829 540 812 563C803 574 792 582 782 587L725 617L690 440L640 400Z"
          fill="url(#pipe)"
        />
        <path d="M757 342C783 358 805 384 820 411C830 433 837 460 837 485C837 510 829 540 812 563C803 574 792 582 782 587" stroke="#4d3b16" />

        {/* branch neck */}
        <path
          d="M575 318L572 362L640 402L674 412C690 417 705 422 720 423C733 422 740 418 745 410C750 400 752 392 752 380L756 325Z"
          fill="url(#neck)"
        />
        <path d="M575 318L572 362M674 412C690 417 705 422 720 423C733 422 740 418 745 410C750 400 752 392 752 380L756 325" stroke="#6b5019" />
        <path d="M581 321h15l1 6-5 7h-5l-6-6z" fill="#9c2c14" />
        <path d="M584 327l9 2M586 331l7 1" stroke="#6f1c0b" />

        {/* cap ring and cap plate */}
        <ellipse cx="668.500" cy="296.500" rx="121" ry="46.500" transform="rotate(6.200 668.500 296.500)" fill="url(#capSide)" stroke="#37373c" />
        <path d="M550 265L548.500 287L600 318L760 318L789 306L791 284Z" fill="url(#capSide)" />
        <ellipse cx="669.500" cy="286" rx="121" ry="46.500" transform="rotate(6.200 669.500 286)" fill="url(#capSide)" stroke="#37373c" />
        <path d="M550.500 264L548.500 286M791 283L789 306" stroke="#37373c" />
        <ellipse cx="670.500" cy="275" rx="121" ry="46.500" transform="rotate(6.200 670.500 275)" fill="#b3b3b9" stroke="#37373c" />
        {capHoles.map(([x, y]) => (
          <ellipse key={`${x}-${y}`} cx={x} cy={y} rx="5.800" ry="2.500" fill="url(#capHole)" stroke="#333338" transform={`rotate(5 ${x} ${y})`} />
        ))}
        <path d="M583.500 288v10c3 5 17 5 20 0v-10z" fill="url(#bolt)" stroke="#6f1c0b" />
        <ellipse cx="593.500" cy="289" rx="10" ry="3.800" fill="#d94a22" stroke="#7a200d" />
        <path d="M588 289l3-2h5l3 2-3 2h-5z" fill="#7a200d" />
        <path d="M589 294v7M599 294v7" stroke="#7a200d" strokeWidth=".7" />

        {/* front mount */}
        <path d={`M407 690L${smooth([...frontLeft, ...frontRim.slice(1)])}L722 783L713 787Z`} fill="#7d88aa" stroke="#30354a" />
        <path d={`M${smooth(frontRim)}L731 585Z`} fill="url(#rim)" stroke="#30354a" />
        <path d={`M407 690L${smooth(frontFace)}L714 787Z`} fill="#5c6378" stroke="#30354a" />
        {frontHoles.map(([x, y]) => <PlateHole key={`${x}-${y}`} x={x} y={y} />)}
        <MountHole x={435} y={669} />
        <MountHole x={690} y={751} />

        {/* seal grooves and bore */}
        <g transform="rotate(61.700 577.500 536)" stroke="#333849">
          <ellipse cx="577.500" cy="536.500" rx="153.500" ry="121" fill="#5c6378" />
          <path d="M577.500 656.500A152.200 120 0 0 0 729 536.500" stroke="#a3b0de" strokeWidth="1.500" />
          <path d="M577.500 656.500A152.200 120 0 0 1 425 536.500" stroke="#8d99c2" strokeWidth="1.200" />
          <ellipse cx="577.500" cy="536.500" rx="151" ry="119" fill="#5c6378" />
          <ellipse cx="577.500" cy="536" rx="147.500" ry="116.500" fill="#545b70" />
          <ellipse cx="577.500" cy="536" rx="145.500" ry="114.800" fill="#666f8c" />
          <ellipse cx="577.500" cy="536" rx="142.700" ry="112.600" fill="#80612a" stroke="#3f3010" />
        </g>
        <ellipse cx="578.500" cy="536" rx="139.300" ry="110" transform="rotate(61.700 578.500 536)" fill="url(#bore)" stroke="#4d3b16" />
        <g clipPath="url(#boreClip)">
          <path d="M608 400C606 425 606 445 611 463C617 487 632 516 653 540C667 555 680 566 697 575L740 560V400Z" fill="#fefefe" stroke="#4d3b16" />
        </g>
        <ellipse cx="578.500" cy="536" rx="139.300" ry="110" transform="rotate(61.700 578.500 536)" stroke="#4d3b16" />

        {/* section plane marker */}
        <path d="M647 484L659 487.500L657.500 508L646 504.500Z" stroke="#000" strokeWidth="2" />
        <path d="M650 493l4 1v4l-4-1z" fill="#f7d437" />
        <path d="M649 487l1 2M657 490l-2 1M649 502l1-2M656 504l-1-2M651 492l3 8" stroke="#f08a4a" strokeWidth=".8" />

        {/* axis triad */}
        <path d="M389.500 1002.500L391 985" stroke="#0b8a1c" />
        <path d="M391.500 976l5.500 10c-3 1.500-8 1.500-11 0z" fill="#0b9a1f" />
        <path d="M391.500 976l5.500 10-4 1z" fill="#14501c" />
        <path d="M389.500 1002.500L403 1006" stroke="#c01010" />
        <path d="M408 1001.500l7 7-5 4h-6l-1-6z" fill="#c00808" />
        <path d="M389.500 1002.500L382 1005" stroke="#0d1f8c" />
        <circle cx="378.500" cy="1008" r="5.500" fill="#0a1f8e" />
        <g fontFamily="Liberation Sans, sans-serif" fontSize="10">
          <text x="389" y="973" fill="#4cc94c">Y</text>
          <text x="416" y="1014" fill="#ee4a22">X</text>
          <text x="367" y="1015" fill="#3d3de0">Z</text>
        </g>

        {/* pointer */}
        <path d="M539.500 885.500v16l4-3.500 2.500 5.500 3-1.500-2.500-5h4.500z" fill="#fff" stroke="#222" />
      </svg>
    </main>
  );
}

export default function App() {
  return (
    <div className="flex h-screen flex-col overflow-hidden bg-white font-['Lato',sans-serif]">
      <TitleBar />
      <TabBar />
      <Ribbon />
      <div className="flex min-h-0 flex-1">
        <Browser />
        <Viewport />
      </div>
    </div>
  );
}
